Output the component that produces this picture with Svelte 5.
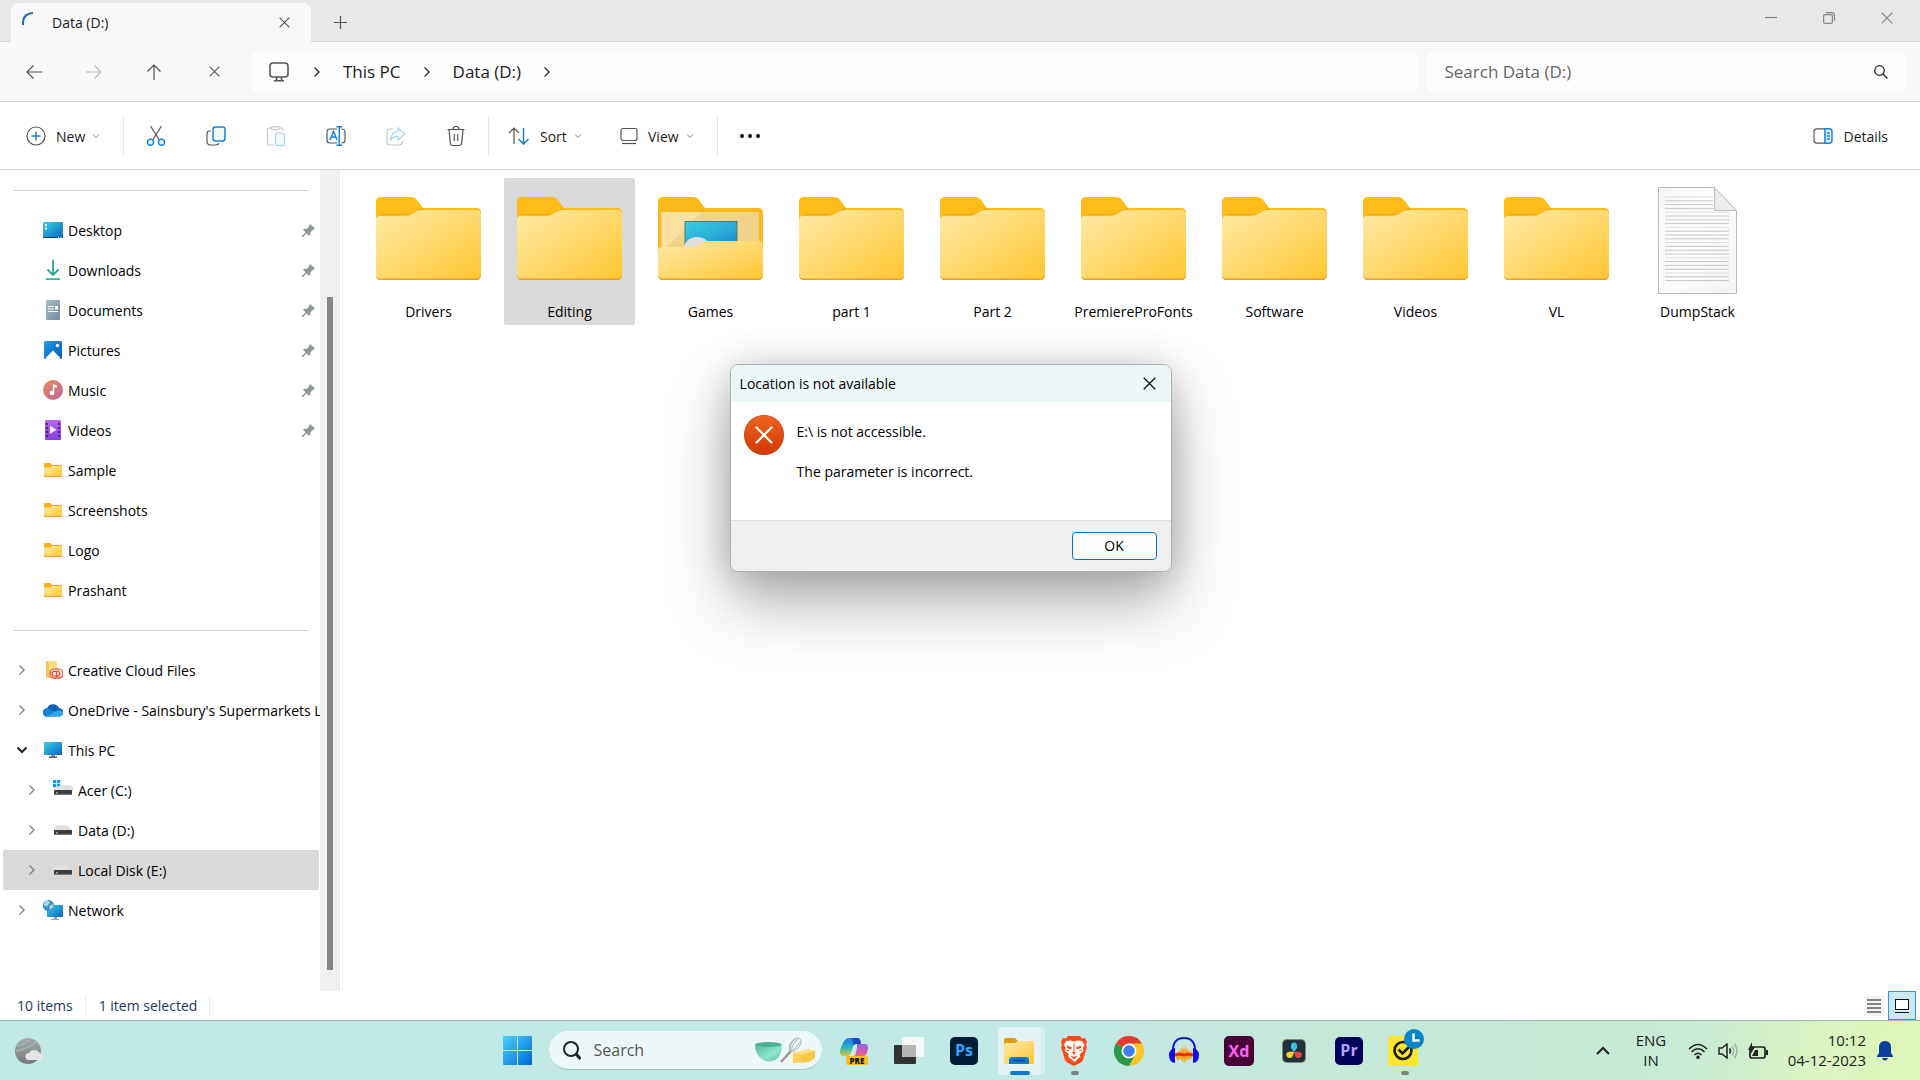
<script>
	const quick = [
		{ name: "Desktop", icon: "desktop", pinned: true },
		{ name: "Downloads", icon: "downloads", pinned: true },
		{ name: "Documents", icon: "documents", pinned: true },
		{ name: "Pictures", icon: "pictures", pinned: true },
		{ name: "Music", icon: "music", pinned: true },
		{ name: "Videos", icon: "videos", pinned: true },
		{ name: "Sample", icon: "folder" },
		{ name: "Screenshots", icon: "folder" },
		{ name: "Logo", icon: "folder" },
		{ name: "Prashant", icon: "folder" },
	];

	const tree = [
		{ name: "Creative Cloud Files", icon: "creative" },
		{ name: "OneDrive - Sainsbury's Supermarkets L", icon: "onedrive" },
		{ name: "This PC", icon: "pc", open: true },
		{ name: "Acer (C:)", icon: "system", child: true },
		{ name: "Data (D:)", icon: "drive", child: true },
		{ name: "Local Disk (E:)", icon: "drive", child: true, selected: true },
		{ name: "Network", icon: "network" },
	];

	const files = [
		{ name: "Drivers" },
		{ name: "Editing" },
		{ name: "Games", kind: "games" },
		{ name: "part 1" },
		{ name: "Part 2" },
		{ name: "PremiereProFonts" },
		{ name: "Software" },
		{ name: "Videos" },
		{ name: "VL" },
		{ name: "DumpStack", kind: "text" },
	];

	const tools = ["Cut", "Copy", "Paste", "Rename", "Share", "Delete"];

	const apps = [
		"Copilot",
		"Task View",
		"Photoshop",
		"File Explorer",
		"Brave",
		"Chrome",
		"Audacity",
		"XD",
		"DaVinci Resolve",
		"Premiere Pro",
		"Norton",
	];

	let selected = $state("Editing");
	let showDialog = $state(true);
	let query = $state("");
</script>

<!-- shared gradients -->
<svg class="defs" width="0" height="0" aria-hidden="true">
	<defs>
		<linearGradient id="gFolder" x1="0" y1="0" x2="1" y2="1">
			<stop offset="0" stop-color="#ffe9a6" />
			<stop offset=".5" stop-color="#ffd96f" />
			<stop offset="1" stop-color="#ffc62f" />
		</linearGradient>
		<linearGradient id="gScreen" x1="0" y1="0" x2="1" y2="1">
			<stop offset="0" stop-color="#35d0e4" />
			<stop offset="1" stop-color="#0c66c4" />
		</linearGradient>
		<linearGradient id="gScreenLight" x1="0" y1="0" x2="1" y2="1">
			<stop offset="0" stop-color="#35d0e4" />
			<stop offset=".6" stop-color="#2aa9d6" />
			<stop offset="1" stop-color="#1a84cb" />
		</linearGradient>
		<linearGradient id="gBlue" x1="0" y1="0" x2="1" y2="1">
			<stop offset="0" stop-color="#1f9bea" />
			<stop offset="1" stop-color="#0559b3" />
		</linearGradient>
		<linearGradient id="gWin" x1="0" y1="0" x2="1" y2="1">
			<stop offset="0" stop-color="#4fd2fb" />
			<stop offset="1" stop-color="#0067d1" />
		</linearGradient>
		<linearGradient id="gMusic" x1="0" y1="0" x2="1" y2="1">
			<stop offset="0" stop-color="#ee8a58" />
			<stop offset="1" stop-color="#b9659f" />
		</linearGradient>
		<linearGradient id="gVideo" x1="0" y1="0" x2="0" y2="1">
			<stop offset="0" stop-color="#b565ea" />
			<stop offset="1" stop-color="#8240e0" />
		</linearGradient>
		<linearGradient id="gDoc" x1="0" y1="0" x2="1" y2="1">
			<stop offset="0" stop-color="#a9bcc8" />
			<stop offset="1" stop-color="#738da0" />
		</linearGradient>
		<linearGradient id="gError" x1="0" y1="0" x2="0" y2="1">
			<stop offset="0" stop-color="#ed6420" />
			<stop offset="1" stop-color="#d53a02" />
		</linearGradient>
		<linearGradient id="gPaper" x1="0" y1="0" x2="1" y2="1">
			<stop offset="0" stop-color="#f6f6f6" />
			<stop offset=".4" stop-color="#fdfdfd" />
			<stop offset="1" stop-color="#f1f4f3" />
		</linearGradient>
		<linearGradient id="gCopA" x1="0" y1="0" x2="0" y2="1">
			<stop offset="0" stop-color="#1c7be0" />
			<stop offset=".5" stop-color="#22b3c9" />
			<stop offset="1" stop-color="#d9c63a" />
		</linearGradient>
		<linearGradient id="gCopB" x1="0" y1="0" x2="0" y2="1">
			<stop offset="0" stop-color="#9a5cf2" />
			<stop offset="1" stop-color="#f0627b" />
		</linearGradient>
		<linearGradient id="gBowl" x1="0" y1="0" x2="1" y2="1">
			<stop offset="0" stop-color="#56b69d" />
			<stop offset=".6" stop-color="#8ce6cd" />
			<stop offset="1" stop-color="#58bba3" />
		</linearGradient>
		<linearGradient id="gWeather" x1="0" y1="0" x2="0" y2="1">
			<stop offset="0" stop-color="#a5acad" />
			<stop offset="1" stop-color="#767a7a" />
		</linearGradient>
	</defs>
</svg>

{#snippet chevron(dir)}
	<svg class="chev" width="8" height="12" viewBox="0 0 8 12">
		{#if dir === "down"}
			<path d="M1 4.5 4 7.5 7 4.5" />
		{:else}
			<path d="M1.5 1.5 6 6 1.5 10.5" />
		{/if}
	</svg>
{/snippet}

{#snippet cross(size)}
	<svg width={size} height={size} viewBox="0 0 12 12" class="line">
		<path d="M.7.7l10.6 10.6M11.3.7.7 11.3" />
	</svg>
{/snippet}

{#snippet sideIcon(name)}
	<svg width="20" height="20" viewBox="0 0 20 20">
		{#if name === "desktop"}
			<rect y="2" width="20" height="16" rx="1" fill="url(#gScreen)" />
			<path d="M2 4h2v2H2zM2 7.500h2v2H2z" fill="#fff" />
			<path d="M0 17h20v0q0 1-1 1H1q-1 0-1-1z" fill="#07406f" />
			<path d="M15 17h1v1h-1zM17.500 17h1v1h-1z" fill="#fff" />
		{:else if name === "downloads"}
			<path d="M10 0v15M4.500 9.500 10 15l5.500-5.500" fill="none" stroke="#22a88e" stroke-width="1.800" />
			<path d="M3 18.200h14v1.800H3z" fill="#2ebd9c" />
		{:else if name === "documents"}
			<rect x="3" width="14" height="20" rx="1" fill="url(#gDoc)" />
			<path d="M5 6.500h6M5 9h6M5 11.500h10" stroke="#fff" stroke-width="1.200" />
			<rect x="12" y="6" width="3" height="3.500" fill="#fff" />
		{:else if name === "pictures"}
			<rect x="1" y="1" width="18" height="18" rx="1.500" fill="url(#gBlue)" />
			<circle cx="14.500" cy="5.500" r="1.700" fill="#fff" />
			<path d="M2.500 18 10 10.500l7.500 7.500q-.5 1-1.500 1H4q-1 0-1.500-1z" fill="#fff" />
		{:else if name === "music"}
			<circle cx="10" cy="10" r="10" fill="url(#gMusic)" />
			<path d="M9.800 4l4 1.600v2.300l-2.500-.9v6a2.300 2.300 0 1 1-1.500-2.100z" fill="#fff" />
		{:else if name === "videos"}
			<rect x="2" width="16" height="20" rx="1" fill="url(#gVideo)" />
			<path d="M4 3v15M16 3v15" stroke="#4b1d8c" stroke-width="2" stroke-dasharray="2 2" />
			<path d="M7 5.500v8.500l6.500-4.300z" fill="#f1e6fb" />
		{:else if name === "folder"}
			<path d="M1 4q0-1 1-1h5.500l1.500 2h9q1 0 1 1v3H1z" fill="#f6b21b" />
			<path d="M1 7.500h6.500L9 6h9.500q.5 0 .5 1v9q0 1-1 1H2q-1 0-1-1z" fill="url(#gFolder)" />
			<path d="M1 15.800h18q0 1.200-1 1.200H2q-1 0-1-1.200z" fill="#eaa628" />
		{:else if name === "creative"}
			<path d="M3 1h11v17H3z" fill="#ffdc7c" />
			<path d="M3 1l3 2v15l-3-1z" fill="#f5c451" />
			<path d="M11.500 9h4a4.500 4.500 0 0 1 0 9.200h-4a4.500 4.500 0 0 1 0-9.200z" fill="#f9e9df" stroke="#e2402b" stroke-width="1.200" />
			<circle cx="11.500" cy="13.800" r="2.500" fill="none" stroke="#e2402b" stroke-width="1.100" />
			<path d="M13 11.500a2.600 2.600 0 1 1 0 4.500" fill="none" stroke="#e2402b" stroke-width="1.100" />
		{:else if name === "onedrive"}
			<path d="M4 8.500a6.500 6.500 0 0 1 12-.5 4 4 0 0 1 0 8.500H4a4 4 0 0 1 0-8z" fill="#0a62bb" />
			<path d="M0 12.500a4.500 4.500 0 0 1 6.500-4L16 14l-9 2.500H4a4 4 0 0 1-4-4z" fill="#1481d8" />
			<path d="M3 16.200l11-5.500q6-1.200 6 2.300 0 3.500-4 3.500H4z" fill="#29a8ee" />
		{:else if name === "pc"}
			<rect x="1" y="2" width="18" height="13" rx=".5" fill="url(#gScreen)" />
			<path d="M8 15h4v2H8z" fill="#8a979f" />
			<path d="M6 16.500h8V18H6z" fill="#4d5a63" />
		{:else if name === "network"}
			<rect x="4" y="5" width="16" height="12" rx=".5" fill="url(#gScreen)" />
			<path d="M11 17h3v2h-3zM8 19h8v1H8z" fill="#9aa3a8" />
			<circle cx="5.500" cy="5.500" r="5.500" fill="#3a8fc0" />
			<path d="M1 3q2-3 4-2.500l2 2-3 4-3-1zM6 6l4-2 .5 3L7 10z" fill="#a6d7e8" />
		{:else}
			{#if name === "system"}
				<path d="M0 0h3.200v3.200H0zM4 0h3.200v3.200H4zM0 4h3.200v3.200H0zM4 4h3.200v3.200H4z" fill="#1795e8" />
			{/if}
			<path d="M{name === 'system' ? 8 : 4} 5h8l3 1 4 5H1V8z" fill="#e0e0e0" />
			<rect x="1" y="10" width="18" height="5" rx=".5" fill="#3c3c3c" />
			<path d="M1 13.800h18V15H1z" fill="#777" />
			<path d="M3 12h1.500v1.500H3z" fill="#63e065" />
		{/if}
	</svg>
{/snippet}

{#snippet toolIcon(name)}
	<svg class="line" width="20" height="20" viewBox="0 0 20 20">
		{#if name === "Cut"}
			<path d="M4.500 0 13 13.500M15.500 0 7 13.500" />
			<g stroke="#1683d8" stroke-width="1.400">
				<circle cx="4.500" cy="16.300" r="3" />
				<circle cx="15.500" cy="16.300" r="3" />
			</g>
		{:else if name === "Copy"}
			<path d="M5 5H3.500Q1 5 1 8v7.500Q1 19 5 19h5q2.500 0 3-2" />
			<rect x="7" y="1" width="12" height="14" rx="2.500" stroke="#1683d8" stroke-width="1.500" fill="#f0f8fe" />
		{:else if name === "Paste"}
			<g stroke="#c6c6c6">
				<path d="M8 19H3.500Q1.500 19 1.500 17V4q0-2 2-2H15q2 0 2 2v1" />
				<rect x="5.500" y=".7" width="8" height="3" rx="1.500" fill="#fff" />
			</g>
			<rect x="9.500" y="7" width="9" height="12.300" rx="1.500" stroke="#a3d3ea" fill="#f2fafd" />
		{:else if name === "Rename"}
			<path d="M11 3H4Q1 3 1 6v8q0 3 3 3h7M15.500 3q3.500 0 3.500 3v8q0 3-3.500 3" />
			<g stroke="#1683d8" stroke-width="1.500">
				<path d="M4 14 7.500 5.500 11 14M5.200 11h4.500M13.300 1v18M10.500.7h5.500M10.500 19.300h5.500" />
			</g>
		{:else if name === "Share"}
			<path d="M7 3H4Q1 3 1 6v10q0 3 3 3h9q3 0 3-3v-1" stroke="#c6c6c6" />
			<path d="M12 2l7 6-7 6v-3.500q-4-.5-7.500 3.500Q5 6 12 5.500z" stroke="#a9d7ea" fill="#eff9fd" />
		{:else}
			<path d="M1.500 3.500h17M7 3.500q0-3 3-3t3 3M3 3.500l1.300 13.500q.2 2.500 2.200 2.500h7q2 0 2.200-2.500L17 3.500M8.300 8v7M11.700 8v7" />
		{/if}
	</svg>
{/snippet}

{#snippet fileIcon(kind)}
	{#if kind === "text"}
		<svg width="79" height="107" viewBox="0 0 79 107">
			<path d="M.5.500h56l22 23v83H.5z" fill="url(#gPaper)" stroke="#b9b9b9" />
			{#each Array(23) as _, i}
				<path
					d="M7 {10 + i * 3.8}h{i < 4 ? 48 : 64}"
					stroke={i % 4 === 0 ? "#dedede" : "#c6c6c6"}
					stroke-width="1"
				/>
			{/each}
			<path d="M56.500.500v23h22z" fill="#ececec" stroke="#bcbcbc" />
		</svg>
	{:else}
		<svg class="big" width="105" height="83" viewBox="0 0 105 83">
			{#if kind === "games"}
				<path d="M0 5q0-5 5-5h30q4 0 6 3l6 8h53q5 0 5 5v50H0z" fill="#fcb91a" />
				<path d="M3 17q0-2 2-2h94q2 0 2 2v36H3z" fill="#fbe0a0" />
				<path d="M8 51l36-36h55q2 0 2 2v34z" fill="#f1d289" />
				<rect x="27" y="24.500" width="52" height="24" fill="url(#gScreenLight)" stroke="#4b7887" />
				<path d="M25 52q3-12 14-12 8 0 12 6v8H25z" fill="#dedede" />
				<path
					d="M0 54q0-4 4-4h30q4 0 7-2l3-2q3-2 6-2h50q5 0 5 5v29q0 5-5 5H5q-5 0-5-5z"
					fill="url(#gFolder)"
				/>
			{:else}
				<path d="M0 5q0-5 5-5h29q5 0 7 3l6 8h53q5 0 5 5v14H0z" fill="#fdbc18" />
				<path d="M5 18h24q9 0 13-5l4-2h1v6H5z" fill="#e9a71d" />
				<path
					d="M0 23q0-4 4-4h24q5 0 8-2l5-3q2-1 5-1h54q5 0 5 5v60q0 5-5 5H5q-5 0-5-5z"
					fill="url(#gFolder)"
				/>
			{/if}
			<path d="M0 77q0 4.500 5 4.500h95q5 0 5-4.500v1q0 5-5 5H5q-5 0-5-5z" fill="#e5a224" />
		</svg>
	{/if}
{/snippet}

{#snippet appIcon(name)}
	{#if name === "Copilot"}
		<svg width="30" height="30" viewBox="0 0 30 30">
			<path d="M6 4q2-2 5-2h8q-3 1-4 5l-3 10q-1 3-4 3H5q-5 0-4-5 2-8 5-11z" fill="url(#gCopA)" />
			<path d="M13 2h6q2 0 2.500 2.500L22 8h-5q-2 0-2.500 2L14 7z" fill="#1948c8" />
			<path d="M18 8h8q3 0 3 4l-1 5q-1 3-4 3h-9q2-1 2-4l1-4z" fill="url(#gCopB)" />
			<rect x="7" y="20" width="22" height="9" rx="2" fill="#fbbe1c" />
			<text x="18" y="28" class="pre">PRE</text>
		</svg>
	{:else if name === "Task View"}
		<svg width="30" height="30" viewBox="0 0 30 30">
			<rect y="9" width="22" height="19" rx="1" fill="#333" />
			<rect x="8" y="1" width="22" height="20" rx="1" fill="#f6f8f8" />
			<path d="M8 9h14v12H8z" fill="#b4b6b6" />
		</svg>
	{:else if name === "Photoshop"}
		<span class="tile ps">Ps</span>
	{:else if name === "XD"}
		<span class="tile xd">Xd</span>
	{:else if name === "Premiere Pro"}
		<span class="tile pr">Pr</span>
	{:else if name === "File Explorer"}
		<svg width="30" height="30" viewBox="0 0 30 30">
			<path d="M0 4q0-2 2-2h9l3 3h14q2 0 2 2v6H0z" fill="#dd9c13" />
			<path d="M0 9q0-2 2-2h9l3-2h15q1 0 1 1v22H0z" fill="url(#gFolder)" />
			<path d="M5 28v-4q0-3 3-3h14q3 0 3 3v4z" fill="#1479cd" />
			<path d="M9 24.500h12" stroke="#0b4f91" stroke-width="1.500" />
		</svg>
	{:else if name === "Brave"}
		<svg width="26" height="30" viewBox="0 0 26 30">
			<path d="M7 0h12l2 2.500 3-.5 2 4-1 3 1 2-4 13q-1 2-3 3l-6 3-6-3q-2-1-3-3L0 11l1-2-1-3 2-4 3 .5z" fill="#fb4c17" />
			<path d="M9 4.500l4 1 4-1 4 .5 2.500 4-1.500 3 .5 3-4 3.500 1 2-6 5.500-6.500-5.500 1-2-4-3.500.5-3L3 9l2-4z" fill="#fff" />
			<path d="M6 9.500l5 2-1 2-4-1.500zM20 9.500l-5 2 1 2 4-1.500zM11 16h4l-2 3zM9 19.500l4 1.500 4-1.500-4 4z" fill="#fb4c17" />
			<path d="M13 7v9M8 15l-3-1M18 15l3-1" stroke="#fb4c17" />
		</svg>
	{:else if name === "Chrome"}
		<svg width="30" height="30" viewBox="0 0 30 30">
			<path d="M15 15 2 7.500A15 15 0 0 1 28 7.500z" fill="#e33b2e" />
			<path d="M15 15 2 7.500A15 15 0 0 0 15 30l6.500-11.300z" fill="#2a9a49" />
			<path d="M15 7.500h13A15 15 0 0 1 15 30l6.500-11.300z" fill="#fcc524" />
			<circle cx="15" cy="15" r="7.500" fill="#fff" />
			<circle cx="15" cy="15" r="5.800" fill="#3c7fee" />
		</svg>
	{:else if name === "Audacity"}
		<svg width="30" height="30" viewBox="0 0 30 30">
			<path d="M4 17Q3 2 15 2t11 15" fill="none" stroke="#1414d8" stroke-width="2" />
			<path d="M7 18l2-3 1 3 1-6 1 5 1-8 1 7 1-7 1 8 1-9 1 8 1-4 1 5 2-3 1 4v3l-2 3-2-2-1 4-1-4-1 6-1-6-1 5-1-4-1 2-1-3-2 3-2-3z" fill="#f5a21b" />
			<path d="M6 17.500l4-1 5 1 4-1 5 1v3l-5-1-4 1-5-1-4 1z" fill="#f52b11" />
			<path d="M6 12v15q-6-1-6-7.500T6 12zM24 12v15q6-1 6-7.500T24 12z" fill="#0f0fe6" />
		</svg>
	{:else if name === "DaVinci Resolve"}
		<svg width="24" height="24" viewBox="0 0 24 24">
			<rect width="24" height="24" rx="5" fill="#7e8a63" />
			<rect x="1" y="1" width="22" height="22" rx="4" fill="#20303d" />
			<path d="M12 13q-4-4-3-6.500a3 3 0 0 1 6 0Q16 9 12 13z" fill="#39bde0" />
			<path d="M12 13q-1 6-4 6a3.200 3.200 0 0 1-2-6q3-1 6 0z" fill="#eccd3b" />
			<path d="M12 13q1 6 4 6a3.200 3.200 0 0 0 2-6q-3-1-6 0z" fill="#e8473f" />
		</svg>
	{:else}
		<svg width="40" height="44" viewBox="-4 0 40 44">
			<rect y="7" width="30" height="30" rx="2.500" fill="#fde62d" />
			<circle cx="15" cy="21.500" r="8.500" fill="none" stroke="#1b1b1b" stroke-width="2.600" />
			<path d="M10.500 20.500l4 4 8-8" fill="none" stroke="#1b1b1b" stroke-width="2.600" />
			<circle cx="26" cy="10" r="10" fill="#0a86c6" />
			<path d="M25.500 4.500v7h6" fill="none" stroke="#fff" stroke-width="2.400" />
		</svg>
	{/if}
{/snippet}

<div class="screen">
	<header class="tabs">
		<div class="tab">
			<svg class="spinner" width="12" height="14" viewBox="0 0 12 14">
				<path d="M1 13Q0 2 11 1" />
			</svg>
			<span>Data (D:)</span>
			<button aria-label="Close tab">{@render cross(11)}</button>
		</div>
		<button class="add" aria-label="New tab">
			<svg class="line" width="13" height="13" viewBox="0 0 13 13"><path d="M6.500 0v13M0 6.500h13" /></svg>
		</button>
		<div class="window">
			<button aria-label="Minimize">
				<svg class="line" width="12" height="12" viewBox="0 0 12 12"><path d="M0 5.500h12" /></svg>
			</button>
			<button aria-label="Restore">
				<svg class="line" width="12" height="12" viewBox="0 0 12 12">
					<rect x=".6" y="2.600" width="8.800" height="8.800" rx="1.500" />
					<path d="M3 .600h5.500q3 0 3 3V9" />
				</svg>
			</button>
			<button aria-label="Close">{@render cross(12)}</button>
		</div>
	</header>

	<nav class="navbar">
		<button aria-label="Back">
			<svg class="line" width="16" height="14" viewBox="0 0 16 14"><path d="M16 7H1M7.500.500 1 7l6.500 6.500" /></svg>
		</button>
		<button aria-label="Forward" disabled>
			<svg class="line" width="16" height="14" viewBox="0 0 16 14"><path d="M0 7h15M8.500.500 15 7l-6.500 6.500" /></svg>
		</button>
		<button aria-label="Up">
			<svg class="line" width="14" height="16" viewBox="0 0 14 16"><path d="M7 16V1M.500 7.500 7 1l6.500 6.500" /></svg>
		</button>
		<button aria-label="Stop">{@render cross(11)}</button>
		<div class="address">
			<svg class="line monitor" width="20" height="20" viewBox="0 0 20 20">
				<rect x="1" y="1" width="18" height="14" rx="3" />
				<path d="M7.500 15v3.500M12.500 15v3.500M5 18.800h10" />
			</svg>
			{@render chevron()}
			<a href="#pc">This PC</a>
			{@render chevron()}
			<a href="#data">Data (D:)</a>
			{@render chevron()}
		</div>
		<label class="search">
			<input type="text" placeholder="Search Data (D:)" aria-label="Search Data (D:)" bind:value={query} />
			<svg class="line" width="14" height="14" viewBox="0 0 14 14">
				<circle cx="5.500" cy="5.500" r="4.800" /><path d="M9 9l4.500 4.500" />
			</svg>
		</label>
	</nav>

	<div class="toolbar">
		<button class="menu new">
			<svg class="line" width="20" height="20" viewBox="0 0 20 20">
				<circle cx="10" cy="10" r="9" />
				<path d="M10 5.500v9M5.500 10h9" stroke="#1683d8" stroke-width="1.500" />
			</svg>
			<span>New</span>
			{@render chevron("down")}
		</button>
		<i></i>
		{#each tools as name}
			<button class="tool" aria-label={name}>{@render toolIcon(name)}</button>
		{/each}
		<i></i>
		<button class="menu sort">
			<svg class="line" width="22" height="18" viewBox="0 0 22 18">
				<path d="M6 17V1M1 6l5-5 5 5" />
				<path d="M15.500 1v16M10.500 12l5 5 5-5" stroke="#1683d8" stroke-width="1.500" />
			</svg>
			<span>Sort</span>
			{@render chevron("down")}
		</button>
		<button class="menu view">
			<svg class="line" width="18" height="18" viewBox="0 0 18 18">
				<rect x="1" y="1.500" width="16" height="12" rx="2" /><path d="M2 16.500h14" />
			</svg>
			<span>View</span>
			{@render chevron("down")}
		</button>
		<i></i>
		<button class="tool" aria-label="See more">
			<svg width="20" height="4" viewBox="0 0 20 4">
				<circle cx="2" cy="2" r="2" /><circle cx="10" cy="2" r="2" /><circle cx="18" cy="2" r="2" />
			</svg>
		</button>
		<button class="menu details">
			<svg class="line" width="20" height="16" viewBox="0 0 20 16">
				<path d="M12 .800H4Q1 .800 1 3.500v9q0 2.700 3 2.700h8" />
				<path d="M12 .800h4q3 0 3 2.700v9q0 2.700-3 2.700h-4zM14 5h3M14 8h3M14 11h3" stroke="#1683d8" stroke-width="1.500" fill="#dff1fc" />
			</svg>
			<span>Details</span>
		</button>
	</div>

	<main>
		<aside>
			<ul>
				<li class="rule"></li>
				{#each quick as o}
					<li>
						<a href="#{o.name}">
							<span class="arrow"></span>
							{@render sideIcon(o.icon)}
							<span class="name">{o.name}</span>
							{#if o.pinned}
								<svg class="pin" width="13" height="13" viewBox="0 0 13 13">
									<path d="M8 0l5 4.500-1 1-1 .2-2.500 2.500-.3 2.800-1 1-2.700-2.700L1 13H0v-1l3.500-3.700L1 6l1-1 3-.3L7.300 2l.2-1z" />
								</svg>
							{/if}
						</a>
					</li>
				{/each}
				<li class="rule"></li>
				{#each tree as o}
					<li>
						<a href="#{o.icon}" class={{ child: o.child, selected: o.selected, open: o.open }}>
							<span class="arrow">
								{#if o.open}
									<svg class="chev" width="12" height="8" viewBox="0 0 12 8"><path d="M1.500 1.500 6 6l4.500-4.500" /></svg>
								{:else}
									{@render chevron()}
								{/if}
							</span>
							{@render sideIcon(o.icon)}
							<span class="name">{o.name}</span>
						</a>
					</li>
				{/each}
			</ul>
			<div class="scroll"><div></div></div>
		</aside>
		<section class="files">
			{#each files as f}
				<button class={{ file: true, on: selected === f.name }} onclick={() => (selected = f.name)}>
					<span class="art">{@render fileIcon(f.kind)}</span>
					{f.name}
				</button>
			{/each}
		</section>
	</main>

	<footer class="status">
		<span>10 items</span>
		<span>1 item selected</span>
		<button class="list" aria-label="Details view">
			<svg width="14" height="14" viewBox="0 0 14 14"><path d="M0 1h14M0 5h14M0 9h14M0 13h14" stroke="#111" /></svg>
		</button>
		<button class="thumbs" aria-label="Large thumbnails">
			<svg width="14" height="14" viewBox="0 0 14 14">
				<rect x=".5" y=".5" width="13" height="10" fill="#fff" stroke="#111" /><path d="M0 13.500h14" stroke="#111" />
			</svg>
		</button>
	</footer>

	<footer class="taskbar">
		<div class="side">
			<button aria-label="Weather">
				<svg width="28" height="26" viewBox="0 0 28 26">
					<circle cx="13" cy="13" r="13" fill="url(#gWeather)" />
					<path d="M2 8q7-1 12-6M1 13q12-2 20-9" stroke="#a3b8b7" stroke-width="1.500" fill="none" />
					<path d="M14 22a3.500 3.500 0 0 1 0-7 6 6 0 0 1 10.500 0 3.500 3.500 0 0 1 0 7z" fill="#e6e6e6" />
				</svg>
			</button>
		</div>
		<div class="apps">
			<button class="start" aria-label="Start">
				<svg width="29" height="29" viewBox="0 0 29 29">
					<path d="M1 0h13v14H0V1q0-1 1-1zM15 0h13q1 0 1 1v13H15zM0 15h14v14H1q-1 0-1-1zM15 15h14v13q0 1-1 1H15z" fill="url(#gWin)" />
				</svg>
			</button>
			<button class="find">
				<svg width="18" height="19" viewBox="0 0 18 19" fill="none" stroke="#222" stroke-width="2">
					<circle cx="8" cy="8" r="7" /><path d="M13 13l4.500 5" stroke-width="3" />
				</svg>
				<span>Search</span>
				<svg class="bake" width="62" height="28" viewBox="0 0 62 28">
					<path d="M1 8h27q0 12-7 16-6 3-12 0Q1 19 1 8z" fill="url(#gBowl)" />
					<ellipse cx="14.500" cy="8.500" rx="13" ry="2.500" fill="#4fae97" />
					<path d="M27 26l10-11" stroke="#9d9494" stroke-width="2.600" />
					<path d="M36 16q-3-9 6-14 6 0 5 5-3 8-11 9zM36 16q3-9 8-13.500M36 16q-1-8 6-14M36 16q7-4 10-10" fill="none" stroke="#aab0af" />
					<path d="M39 17l16-4 6 2v7l-6 4-16 1z" fill="#f9c747" />
					<path d="M39 17l16-4 6 2-14 4z" fill="#ffe083" />
					<path d="M39 17l8 2v8h-8z" fill="#ffd05c" />
				</svg>
			</button>
			{#each apps as name}
				<button
					class={{
						app: true,
						active: name === "File Explorer",
						running: name === "Brave" || name === "Norton",
					}}
					aria-label={name}
				>
					{@render appIcon(name)}
				</button>
			{/each}
		</div>
		<div class="side tray">
			<button aria-label="Hidden icons">
				<svg width="14" height="9" viewBox="0 0 14 9"><path d="M1 8l6-6 6 6" fill="none" stroke="#222" stroke-width="2" /></svg>
			</button>
			<button class="lang">ENG<br />IN</button>
			<button class="net" aria-label="Network, volume and battery">
				<svg width="20" height="16" viewBox="0 0 20 16" fill="none" stroke="#222" stroke-width="1.500">
					<path d="M1 6q9-9 18 0M3.500 9q6.500-6.500 13 0M6.500 12q3.500-3.500 7 0" /><circle cx="10" cy="14.300" r="1" fill="#222" />
				</svg>
				<svg width="20" height="16" viewBox="0 0 20 16" fill="none" stroke="#222" stroke-width="1.500">
					<path d="M1 5h3l5-4v14l-5-4H1z" /><path d="M11.500 5.500q2 2.500 0 5" />
					<path d="M14 3.500q3.500 4.500 0 9M16.500 1q5 7 0 14" stroke="#98b7a4" />
				</svg>
				<svg width="20" height="18" viewBox="0 0 20 18">
					<rect x="2" y="5" width="15" height="11" rx="2" fill="none" stroke="#222" stroke-width="1.700" />
					<path d="M18 8h2v5h-2zM4 14l3-6h3v6z" fill="#222" />
					<path d="M4 0 0 8h3l-1 5 5-8H4z" fill="#222" />
				</svg>
			</button>
			<button class="clock">10:12<br />04-12-2023</button>
			<button aria-label="Notifications">
				<svg width="16" height="20" viewBox="0 0 16 20" fill="#0a3f9c">
					<path d="M8 0q6 0 6 6.500V12l2 3v1H0v-1l2-3V6.500Q2 0 8 0zM5 17h6q-1 2.500-3 2.500T5 17z" />
				</svg>
			</button>
		</div>
	</footer>

	{#if showDialog}
		<div class="dialog" role="alertdialog" aria-labelledby="title">
			<header>
				<span id="title">Location is not available</span>
				<button aria-label="Close" onclick={() => (showDialog = false)}>{@render cross(13)}</button>
			</header>
			<div class="message">
				<svg width="40" height="40" viewBox="0 0 40 40">
					<circle cx="20" cy="20" r="20" fill="#c73a0a" />
					<circle cx="20" cy="19.500" r="19.300" fill="url(#gError)" />
					<path d="M12.500 12.500l15 15M27.500 12.500l-15 15" stroke="#fff" stroke-width="2.200" stroke-linecap="round" />
				</svg>
				<div>
					<p>E:\ is not accessible.</p>
					<p>The parameter is incorrect.</p>
				</div>
			</div>
			<div class="actions">
				<button onclick={() => (showDialog = false)}>OK</button>
			</div>
		</div>
	{/if}
</div>

<style>
	:global(body) {
		margin: 0;
		background: #fff;
	}

	.defs {
		position: absolute;
	}

	.screen {
		position: relative;
		display: flex;
		flex-direction: column;
		min-height: 100vh;
		font: 14px/20px "Segoe UI", "Open Sans", sans-serif;
		color: #1b1b1b;
	}

	.screen * {
		box-sizing: border-box;
	}

	svg {
		display: block;
		flex: none;
	}

	button {
		display: flex;
		align-items: center;
		justify-content: center;
		border: none;
		background: none;
		padding: 0;
		font: inherit;
		color: inherit;
	}

	a {
		color: inherit;
		text-decoration: none;
	}

	.line {
		fill: none;
		stroke: #555;
		stroke-width: 1.2;
	}

	.chev {
		fill: none;
		stroke: #333;
		stroke-width: 1.4;
	}

	/* title bar */
	.tabs {
		display: flex;
		height: 42px;
		padding: 0 4px 0 11px;
		background: #e8e8e8;
		border-bottom: 1px solid #d8d8d8;
	}

	.tab {
		display: flex;
		align-items: center;
		width: 300px;
		height: 39px;
		margin-top: 3px;
		padding: 0 16px 0 11px;
		border-radius: 8px 8px 0 0;
		background: #f8f8f8;
	}

	.tab span {
		flex: 1;
		margin-left: 18px;
	}

	.tab button {
		width: 22px;
		height: 22px;
	}

	.spinner {
		margin-bottom: 8px;
		fill: none;
		stroke: #0f6cbd;
		stroke-width: 2;
	}

	.add {
		width: 58px;
		padding-top: 4px;
	}

	.window {
		display: flex;
		margin-left: auto;
		height: 36px;
	}

	.window button {
		width: 58px;
	}

	.window .line {
		stroke: #858585;
	}

	/* address row */
	.navbar {
		display: flex;
		align-items: center;
		height: 60px;
		padding: 0 14px 0 4px;
		background: #f8f8f8;
		border-bottom: 1px solid #d6d6d6;
	}

	.navbar > button {
		width: 60px;
		height: 40px;
	}

	.navbar > button:disabled {
		opacity: 0.4;
	}

	.address,
	.search {
		display: flex;
		align-items: center;
		height: 40px;
		border-radius: 5px;
		background: #fdfdfd;
		font-size: 17px;
	}

	.address {
		flex: 1;
		gap: 22px;
		margin: 0 10px 0 8px;
		padding-left: 17px;
	}

	.address .monitor {
		margin-right: 2px;
		stroke-width: 1.6;
	}

	.search {
		width: calc(25% + 4px);
		padding: 0 18px;
	}

	.search input {
		flex: 1;
		min-width: 0;
		border: none;
		outline: none;
		background: none;
		padding: 0;
		font: inherit;
	}

	.search input::placeholder {
		color: #666;
		opacity: 1;
	}

	.search .line {
		stroke: #222;
	}

	/* command bar */
	.toolbar {
		display: flex;
		align-items: center;
		height: 68px;
		padding: 0 32px 0 26px;
		border-bottom: 1px solid #d6d6d6;
	}

	.toolbar i {
		width: 1px;
		height: 40px;
		margin: 0 2px;
		background: #e6e6e6;
	}

	.tool {
		width: 60px;
		height: 40px;
	}

	.menu {
		justify-content: flex-start;
		gap: 10px;
		height: 40px;
	}

	.menu span {
		padding-top: 2px;
	}

	.menu .chev {
		margin-left: -3px;
		stroke: #888;
		stroke-width: 1;
	}

	.new {
		width: 95px;
	}

	.sort,
	.view {
		width: 112px;
		padding-left: 17px;
	}

	.details {
		margin-left: auto;
	}

	/* navigation pane */
	main {
		display: flex;
		flex: 1;
	}

	aside {
		display: flex;
		width: 343px;
		border-right: 1px solid #f3f3f3;
		color: #000;
	}

	ul {
		flex: 1;
		min-width: 0;
		margin: 0;
		padding: 0 1px 0 3px;
		list-style: none;
	}

	.rule {
		display: flex;
		align-items: center;
		height: 40px;
		padding: 0 10px;
	}

	.rule::after {
		content: "";
		flex: 1;
		height: 1px;
		background: #d4d4d4;
	}

	li a {
		display: flex;
		align-items: center;
		height: 40px;
		border-radius: 2px;
	}

	li a.child {
		padding-left: 10px;
	}

	li a.selected {
		background: #d9d9d9;
	}

	.arrow {
		display: flex;
		flex: none;
		justify-content: center;
		width: 40px;
		padding-right: 2px;
	}

	.arrow .chev {
		stroke: #858585;
	}

	.open .arrow .chev {
		stroke: #222;
		stroke-width: 2;
	}

	.name {
		flex: 1;
		margin-left: 5px;
		padding-top: 2px;
		white-space: nowrap;
	}

	.pin {
		margin-right: 4px;
		fill: #8f9799;
	}

	.scroll {
		width: 20px;
		margin-right: 2px;
		padding: 127px 7px 21px;
		background: #f0f0f0;
	}

	.scroll div {
		height: 100%;
		background: #868686;
	}

	/* icon grid */
	.files {
		display: flex;
		flex: 1;
		flex-wrap: wrap;
		align-content: flex-start;
		gap: 10px;
		padding: 8px 20px;
	}

	.file {
		flex-direction: column;
		justify-content: flex-start;
		width: 131px;
		height: 147px;
		border-radius: 2px;
		color: #000;
	}

	.file.on {
		background: #d9d9d9;
	}

	.art {
		display: flex;
		align-items: center;
		height: 124px;
	}

	.big {
		margin-bottom: 4px;
	}

	/* status bar */
	.status {
		display: flex;
		align-items: center;
		height: 30px;
		padding: 0 4px;
		border-bottom: 1px solid #a3b8b2;
		color: #1e395b;
	}

	.status span {
		padding: 0 12px 0 13px;
		border-right: 1px solid #ececec;
	}

	.status button {
		height: 20px;
		width: 20px;
	}

	.status .list {
		margin: 0 4px 0 auto;
		background: #f3f3f3;
	}

	.status .thumbs {
		width: 28px;
		height: 29px;
		border: 1px solid #2f98d8;
		background: #cbe8f3;
	}

	/* taskbar */
	.taskbar {
		display: flex;
		align-items: center;
		height: 59px;
		background: linear-gradient(100deg, #c2eae5 0%, #c2e9e6 55%, #c6e8d8 70%, #c9ead5 88%, #dcf4bf 95%, #def6b6 100%);
	}

	.side {
		flex: 1;
		display: flex;
		align-items: center;
		padding: 0 15px;
	}

	.apps {
		display: flex;
		align-items: center;
		padding-left: 26px;
	}

	.start {
		margin-right: 17px;
	}

	.find {
		justify-content: flex-start;
		width: 273px;
		height: 39px;
		margin-right: 5px;
		padding: 0 6px 0 14px;
		border-bottom: 1px solid #9dc4c0;
		border-radius: 20px;
		background: #ecf8f8;
		font-size: 16px;
		color: #555;
	}

	.find span {
		flex: 1;
		margin-left: 13px;
		text-align: left;
	}

	.app {
		position: relative;
		width: 43px;
		height: 48px;
		margin: 0 6px;
		border-radius: 4px;
	}

	.app.active {
		background: #e3f2f3;
		box-shadow: 5px 0 0 -1px #d9eeee;
	}

	.app.active::after,
	.app.running::after {
		content: "";
		position: absolute;
		left: 18px;
		bottom: 0;
		width: 8px;
		height: 4px;
		border-radius: 2px;
		background: #7d8584;
	}

	.app.active::after {
		left: 12px;
		width: 20px;
		background: #0f78d4;
	}

	.tile {
		width: 28px;
		height: 28px;
		border-radius: 5px;
		font-size: 16px;
		font-weight: 700;
		line-height: 26px;
		text-align: center;
	}

	.ps {
		background: #001e36;
		color: #31a8ff;
	}

	.xd {
		width: 30px;
		height: 30px;
		background: #470137;
		line-height: 30px;
		color: #ff61f6;
	}

	.pr {
		background: #00005b;
		color: #b3a0ff;
	}

	.pre {
		font-size: 8px;
		font-weight: 800;
		text-anchor: middle;
		fill: #111;
	}

	.tray {
		justify-content: flex-end;
		padding-right: 27px;
	}

	.lang,
	.clock {
		padding-bottom: 2px;
		font-size: 15px;
	}

	.lang {
		margin: 0 22px 0 26px;
		width: 30px;
	}

	.net {
		gap: 10px;
	}

	.clock {
		margin: 0 11px 0 18px;
		width: 80px;
		justify-content: flex-end;
		text-align: right;
	}

	/* error box */
	.dialog {
		position: absolute;
		top: 364px;
		left: 38%;
		width: 442px;
		border: 1px solid #a9adae;
		border-radius: 8px;
		background: #fff;
		color: #000;
		box-shadow:
			0 32px 64px rgba(0, 0, 0, 0.3),
			0 2px 36px rgba(0, 0, 0, 0.18);
		overflow: hidden;
	}

	.dialog header {
		display: flex;
		align-items: center;
		justify-content: space-between;
		height: 37px;
		padding: 0 5px 0 9px;
		background: #ecf6f9;
	}

	.dialog header button {
		width: 32px;
		height: 32px;
	}

	.dialog header .line {
		stroke: #111;
	}

	.message {
		display: flex;
		gap: 13px;
		height: 118px;
		padding: 13px;
	}

	.message p {
		margin: 7px 0 20px;
	}

	.message p + p {
		margin: 0;
	}

	.actions {
		display: flex;
		justify-content: flex-end;
		height: 51px;
		padding: 11px 14px;
		border-top: 1px solid #dfdfdf;
		background: #f0f0f0;
	}

	.actions button {
		width: 85px;
		height: 28px;
		border: 1px solid #0078d4;
		border-radius: 4px;
		background: #fdfdfd;
	}
</style>
